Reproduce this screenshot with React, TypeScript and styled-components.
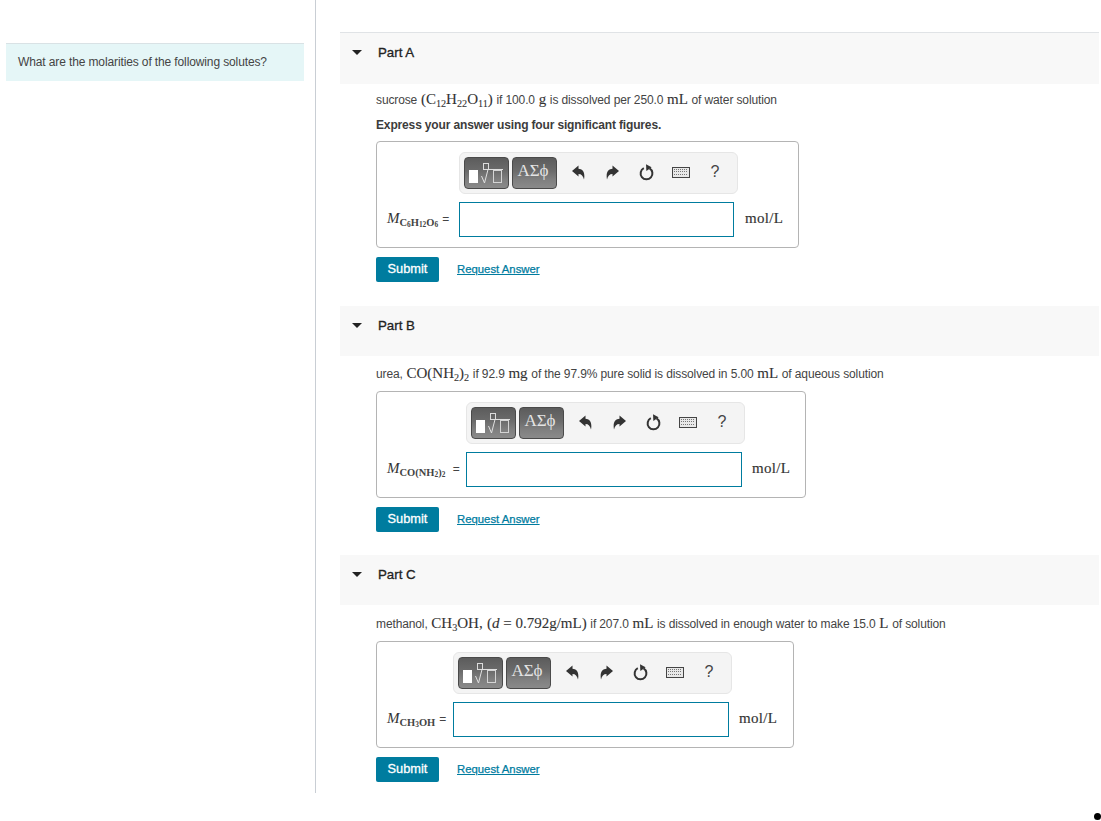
import React from 'react';
import styled, { createGlobalStyle } from 'styled-components';

const GlobalStyle = createGlobalStyle`
  html, body {
    margin: 0;
    padding: 0;
    background: #fff;
    font-family: "Liberation Sans", Arial, sans-serif;
  }
  * { box-sizing: border-box; }
`;

const Page = styled.div`
  display: flex;
  align-items: flex-start;
  width: 1101px;
  height: 821px;
  overflow: hidden;
`;

const Sidebar = styled.aside`
  width: 316px;
  height: 793px;
  flex: none;
  padding: 43px 11px 0 6px;
  border-right: 1px solid #c9ced4;
`;

const Prompt = styled.div`
  height: 38px;
  padding: 0 0 2px 12px;
  display: flex;
  align-items: center;
  background: #e5f6f7;
  border-top: 1px solid #d9e2e5;
  font-size: 12px;
  letter-spacing: -0.12px;
  color: #444;
`;

const Main = styled.main`
  flex: 1;
  padding: 32px 2px 0 24px;
`;

const Section = styled.section<{ $after: number }>`
  margin-bottom: ${(p) => p.$after}px;
`;

const PartHeader = styled.div<{ $height: number; $ruled?: boolean }>`
  height: ${(p) => p.$height}px;
  display: flex;
  align-items: center;
  gap: 16px;
  padding: 0 0 12px 12px;
  background: #f8f8f8;
  border-top: ${(p) => (p.$ruled ? '1px solid #e0e3e6' : 'none')};
`;

const Caret = styled.span`
  width: 0;
  height: 0;
  border-left: 5px solid transparent;
  border-right: 5px solid transparent;
  border-top: 5px solid #222;
`;

const PartTitle = styled.h2`
  margin: 0;
  font-size: 13.3px;
  font-weight: 400;
  color: #222;
  -webkit-text-stroke: 0.3px #222;
`;

const PartBody = styled.div<{ $top: number }>`
  padding: ${(p) => p.$top}px 0 0 36px;
`;

const Question = styled.p`
  margin: 0;
  height: 18px;
  line-height: 16px;
  font-size: 12px;
  letter-spacing: -0.12px;
  color: #444;
  white-space: nowrap;
`;

const Instruction = styled.p`
  margin: 6px 0 0;
  height: 18px;
  line-height: 20px;
  font-size: 12px;
  letter-spacing: -0.15px;
  font-weight: 700;
  color: #3c3c3c;
`;

const Math = styled.span`
  margin: 0 0.5px;
  font-family: "Liberation Serif", "Times New Roman", serif;
  font-size: 15px;
  letter-spacing: 0;
  color: #333;
  -webkit-text-stroke: 0.1px #333;
`;

const Sub = styled.sub`
  font-size: 0.68em;
  line-height: 0;
  vertical-align: -0.25em;
`;

const AnswerBox = styled.div<{ $width: number; $label: number }>`
  width: ${(p) => p.$width}px;
  height: 107px;
  margin-top: 8px;
  padding: 10px 0 0 10px;
  display: grid;
  grid-template-columns: ${(p) => p.$label}px 276px 1fr;
  grid-template-rows: 42px 35px;
  row-gap: 8px;
  align-items: center;
  background: #fff;
  border: 1px solid #b4b4b4;
  border-radius: 4px;
`;

const Toolbar = styled.div`
  grid-column: 2 / 4;
  width: 279px;
  height: 42px;
  display: flex;
  align-items: center;
  padding-left: 4px;
  background: #f4f4f4;
  border: 1px solid #e6e6e6;
  border-radius: 6px;
`;

const TemplateButton = styled.span<{ $wide?: boolean }>`
  width: 45px;
  height: 32px;
  margin-right: 3px;
  flex: none;
  display: flex;
  align-items: center;
  justify-content: center;
  padding: 0 ${(p) => (p.$wide ? 3 : 0)}px ${(p) => (p.$wide ? 5 : 0)}px 0;
  background: linear-gradient(#5c5c5c 0%, #6c6c6c 45%, #7e7e7e 70%, #8a8a8a 100%);
  border: 1px solid #4a4a4a;
  border-radius: 4px;
  font-family: "Liberation Serif", serif;
  font-size: 17px;
  color: #e4e4e4;
`;

const ToolIcons = styled.div`
  display: flex;
  align-items: center;
  margin-left: 1px;
  padding-bottom: 1px;
`;

const ToolIcon = styled.span`
  width: 34.2px;
  height: 20px;
  display: flex;
  align-items: center;
  justify-content: center;
  color: #333;
`;

const Help = styled.span`
  font-size: 16px;
  color: #444;
  margin-top: -2px;
`;

const Label = styled.div`
  display: flex;
  align-items: baseline;
  margin-top: -2px;
  white-space: nowrap;
  font-size: 12px;
  color: #444;
`;

const Variable = styled.i`
  font-family: "Liberation Serif", serif;
  font-size: 15px;
  color: #333;
`;

const LabelSub = styled.span`
  font-family: "Liberation Serif", serif;
  font-size: 10.5px;
  font-weight: 700;
  color: #444;
  position: relative;
  top: 3px;
  margin-right: 4px;
`;

const TinySub = styled.sub`
  font-size: 0.7em;
  line-height: 0;
  vertical-align: -0.2em;
`;

const AnswerInput = styled.input<{ $width: number }>`
  width: ${(p) => p.$width}px;
  height: 35px;
  padding: 0 6px;
  background: #fff;
  border: 1px solid #007c9f;
  outline: none;
`;

const Unit = styled.span`
  padding: 0 0 2px 10px;
  font-family: "Liberation Serif", serif;
  font-size: 15px;
  letter-spacing: 0.3px;
  color: #333;
  -webkit-text-stroke: 0.15px #333;
  white-space: nowrap;
`;

const Actions = styled.div`
  display: flex;
  align-items: center;
  gap: 18px;
  margin-top: 9px;
`;

const SubmitButton = styled.button`
  width: 63px;
  height: 25px;
  padding: 0 0 3px;
  background: #007c9f;
  border: none;
  border-radius: 2px;
  font: 400 12.8px "Liberation Sans", Arial, sans-serif;
  color: #fff;
  -webkit-text-stroke: 0.3px #fff;
`;

const RequestLink = styled.a`
  margin-top: -2px;
  font-size: 11.35px;
  color: #007c9f;
  text-decoration: underline;
  -webkit-text-stroke: 0.25px #007c9f;
`;

const CursorDot = styled.span`
  position: fixed;
  left: 1094px;
  top: 813px;
  width: 7px;
  height: 7px;
  border-radius: 50%;
  background: #000;
`;

function RootGlyph() {
  return (
    <svg width="35" height="22" viewBox="0 0 35 22" fill="none">
      <rect x="0" y="8" width="9" height="13" fill="#fff" />
      <rect x="14.5" y="1.5" width="5" height="6" stroke="#dcdcdc" />
      <path d="M12.5 14l3 7 3.5-13.5h15" stroke="#e0e0e0" />
      <rect x="24.5" y="8.5" width="8" height="12" stroke="#d4d4d4" />
    </svg>
  );
}

function UndoIcon() {
  return (
    <svg width="13" height="15" viewBox="0 0 13 15">
      <path
        d="M0 6L6.5 0.5V3.7C10.5 3.8 13.4 6.8 12 14.5C11.2 11 9.5 9 6.5 9V11.5Z"
        fill="currentColor"
      />
    </svg>
  );
}

function RedoIcon() {
  return (
    <svg width="13" height="15" viewBox="0 0 13 15">
      <path
        d="M13 6L6.5 0.5V3.7C2.5 3.8 -0.4 6.8 1 14.5C1.8 11 3.5 9 6.5 9V11.5Z"
        fill="currentColor"
      />
    </svg>
  );
}

function ResetIcon() {
  return (
    <svg width="15" height="17" viewBox="0 0 15 17" fill="none">
      <path
        d="M4.8 4.2A5.9 5.9 0 1 0 10.6 4.4"
        stroke="currentColor"
        strokeWidth="2"
      />
      <path d="M7 0.2L12.6 3.2L7.4 7Z" fill="currentColor" />
    </svg>
  );
}

function KeyboardIcon() {
  return (
    <svg width="18" height="11" viewBox="0 0 18 11" fill="none">
      <rect x="0.5" y="0.5" width="17" height="10" fill="#e8e8e8" stroke="#444" />
      <path d="M2 2.5h14M2 4.5h14" stroke="#777" strokeDasharray="1 1" />
      <path d="M2 7.5h14" stroke="#777" strokeDasharray="1 1" />
    </svg>
  );
}

type PartProps = {
  title: string;
  ruled?: boolean;
  headerHeight: number;
  bodyTop: number;
  after: number;
  boxWidth: number;
  labelWidth: number;
  inputWidth: number;
  question: React.ReactNode;
  instruction?: string;
  label: React.ReactNode;
};

function Part(props: PartProps) {
  return (
    <Section $after={props.after}>
      <PartHeader $height={props.headerHeight} $ruled={props.ruled}>
        <Caret />
        <PartTitle>{props.title}</PartTitle>
      </PartHeader>
      <PartBody $top={props.bodyTop}>
        <Question>{props.question}</Question>
        {props.instruction && <Instruction>{props.instruction}</Instruction>}
        <AnswerBox $width={props.boxWidth} $label={props.labelWidth}>
          <span />
          <Toolbar>
            <TemplateButton>
              <RootGlyph />
            </TemplateButton>
            <TemplateButton $wide>ΑΣϕ</TemplateButton>
            <ToolIcons>
              <ToolIcon><UndoIcon /></ToolIcon>
              <ToolIcon><RedoIcon /></ToolIcon>
              <ToolIcon><ResetIcon /></ToolIcon>
              <ToolIcon><KeyboardIcon /></ToolIcon>
              <ToolIcon><Help>?</Help></ToolIcon>
            </ToolIcons>
          </Toolbar>
          <Label>{props.label}</Label>
          <AnswerInput $width={props.inputWidth} />
          <Unit>mol/L</Unit>
        </AnswerBox>
        <Actions>
          <SubmitButton>Submit</SubmitButton>
          <RequestLink href="#">Request Answer</RequestLink>
        </Actions>
      </PartBody>
    </Section>
  );
}

export default function App() {
  return (
    <Page>
      <GlobalStyle />
      <Sidebar>
        <Prompt>What are the molarities of the following solutes?</Prompt>
      </Sidebar>
      <Main>
        <Part
          title="Part A"
          ruled
          headerHeight={52}
          bodyTop={7}
          after={24}
          boxWidth={423}
          labelWidth={72}
          inputWidth={275}
          instruction="Express your answer using four significant figures."
          question={
            <>
              sucrose <Math>(C<Sub>12</Sub>H<Sub>22</Sub>O<Sub>11</Sub>)</Math> if 100.0 <Math>g</Math> is
              dissolved per 250.0 <Math>mL</Math> of water solution
            </>
          }
          label={
            <>
              <Variable>M</Variable>
              <LabelSub>C<TinySub>6</TinySub>H<TinySub>12</TinySub>O<TinySub>6</TinySub></LabelSub>=
            </>
          }
        />
        <Part
          title="Part B"
          headerHeight={50}
          bodyTop={9}
          after={23}
          boxWidth={430}
          labelWidth={79}
          inputWidth={276}
          question={
            <>
              urea, <Math>CO(NH<Sub>2</Sub>)<Sub>2</Sub></Math> if 92.9 <Math>mg</Math> of the 97.9% pure solid
              is dissolved in 5.00 <Math>mL</Math> of aqueous solution
            </>
          }
          label={
            <>
              <Variable>M</Variable>
              <LabelSub>CO(NH<TinySub>2</TinySub>)<TinySub>2</TinySub></LabelSub>&nbsp;=
            </>
          }
        />
        <Part
          title="Part C"
          headerHeight={50}
          bodyTop={10}
          after={0}
          boxWidth={418}
          labelWidth={66}
          inputWidth={276}
          question={
            <>
              methanol, <Math>CH<Sub>3</Sub>OH,</Math> <Math>(<i>d</i> = 0.792g/mL)</Math> if 207.0{' '}
              <Math>mL</Math> is dissolved in enough water to make 15.0 <Math>L</Math> of solution
            </>
          }
          label={
            <>
              <Variable>M</Variable>
              <LabelSub>CH<TinySub>3</TinySub>OH</LabelSub>=
            </>
          }
        />
      </Main>
      <CursorDot />
    </Page>
  );
}
